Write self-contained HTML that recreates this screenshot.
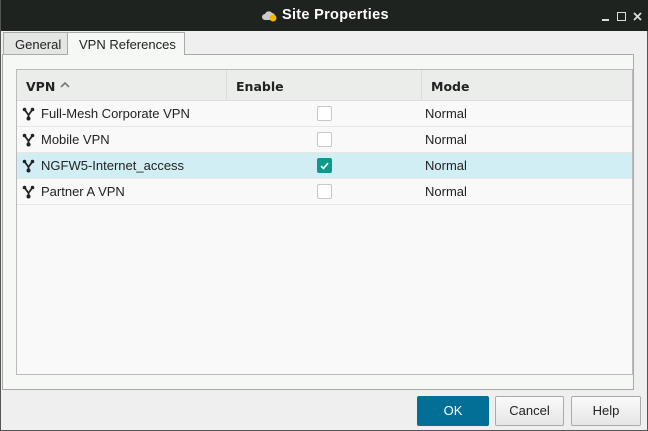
<!DOCTYPE html>
<html><head><style>
*{box-sizing:border-box;margin:0;padding:0}
body{width:648px;height:431px;overflow:hidden;background:#efefef;font-family:"Liberation Sans","DejaVu Sans",sans-serif;font-size:13px;color:#222;position:relative;border-left:1px solid #555;border-right:1px solid #555;border-bottom:1px solid #555}
.abs{position:absolute}
.title{left:0;top:0;width:648px;height:31px;background:#1e2320;color:#fff;font-weight:bold;font-size:14.5px;font-family:"Liberation Sans",sans-serif;letter-spacing:0.3px}
.tab{top:32px;height:23px;border:1px solid #aaa;font-size:13px;padding:4px 0 0 11px}
.panel{left:1px;top:54px;width:632px;height:336px;border:1px solid #aaa;background:#f5f8f5}
.table{left:15px;top:69px;width:617px;height:306px;border:1px solid #bbb;background:#f8f9f8}
.hdr{left:0;top:0;width:615px;height:31px;background:#ebedeb;border-bottom:1px solid #ddd;font-weight:bold;font-family:"DejaVu Sans",sans-serif;font-size:12.5px}
.row{left:0;width:615px;height:26px;border-bottom:1px solid #e6e8e6}
.cb{width:15px;height:15px;border:1px solid #c8c8c8;border-radius:2px;background:#fff;left:300px;top:5px}
.btn{top:396px;height:30px;border:1px solid #aaa;border-radius:2px;background:linear-gradient(#fafafa,#e6e6e6);text-align:center;line-height:28px;font-size:13px}
</style></head><body>
<div class="abs title">
 <svg class="abs" style="left:261px;top:9px" width="16" height="14" viewBox="0 0 16 14"><path d="M3 11a3 3 0 0 1 0-6a4 4 0 0 1 7-1a3 3 0 0 1 3 3v4z" fill="#ccc"/><circle cx="11" cy="9" r="3.5" fill="#f5b800"/></svg>
 <span class="abs" style="left:281px;top:7px">Site Properties</span>
 <span class="abs" style="left:601px;top:19px;width:7px;height:2px;background:#ddd"></span>
 <span class="abs" style="left:616px;top:12px;width:9px;height:9px;border:1.5px solid #ddd"></span>
 <svg class="abs" style="left:632px;top:12px" width="9" height="9"><path d="M1 1l7 7M8 1l-7 7" stroke="#ddd" stroke-width="1.8"/></svg>
</div>
<div class="abs panel"></div>
<div class="abs tab" style="left:2px;width:65px;background:#e4e6e4">General</div>
<div class="abs tab" style="left:66px;width:118px;background:#f5f8f5;border-bottom:none;height:23px">VPN References</div>
<div class="abs table">
 <div class="abs hdr">
  <span class="abs" style="left:9px;top:9px">VPN</span>
  <svg class="abs" style="left:43px;top:11px" width="10" height="7"><path d="M1 6l4-4l4 4" stroke="#777" stroke-width="1.6" fill="none"/></svg>
  <span class="abs" style="left:209px;top:0;width:1px;height:31px;background:#ddd"></span>
  <span class="abs" style="left:219px;top:9px">Enable</span>
  <span class="abs" style="left:404px;top:0;width:1px;height:31px;background:#ddd"></span>
  <span class="abs" style="left:414px;top:9px">Mode</span>
 </div>
 <div class="abs row" style="top:31px"><svg class="abs" style="left:5px;top:6px" width="13" height="14"><path d="M2.5 2.5l4 5.5l4-5.5M6.5 8v4" stroke="#222" stroke-width="1.8" fill="none"/><circle cx="2.5" cy="2.5" r="1.8" fill="#222"/><circle cx="10.5" cy="2.5" r="1.8" fill="#222"/><circle cx="6.5" cy="11.5" r="2" fill="#222"/></svg><span class="abs" style="left:24px;top:5px">Full-Mesh Corporate VPN</span><div class="abs cb"></div><span class="abs" style="left:408px;top:5px">Normal</span></div>
 <div class="abs row" style="top:57px"><svg class="abs" style="left:5px;top:6px" width="13" height="14"><path d="M2.5 2.5l4 5.5l4-5.5M6.5 8v4" stroke="#222" stroke-width="1.8" fill="none"/><circle cx="2.5" cy="2.5" r="1.8" fill="#222"/><circle cx="10.5" cy="2.5" r="1.8" fill="#222"/><circle cx="6.5" cy="11.5" r="2" fill="#222"/></svg><span class="abs" style="left:24px;top:5px">Mobile VPN</span><div class="abs cb"></div><span class="abs" style="left:408px;top:5px">Normal</span></div>
 <div class="abs row" style="top:83px;background:#d1eef5"><svg class="abs" style="left:5px;top:6px" width="13" height="14"><path d="M2.5 2.5l4 5.5l4-5.5M6.5 8v4" stroke="#222" stroke-width="1.8" fill="none"/><circle cx="2.5" cy="2.5" r="1.8" fill="#222"/><circle cx="10.5" cy="2.5" r="1.8" fill="#222"/><circle cx="6.5" cy="11.5" r="2" fill="#222"/></svg><span class="abs" style="left:24px;top:5px">NGFW5-Internet_access</span><div class="abs cb" style="background:#0c9b8a;border-color:#0c9b8a"><svg width="13" height="13"><path d="M3 7l2.5 2.5L10 4" stroke="#fff" stroke-width="1.6" fill="none"/></svg></div><span class="abs" style="left:408px;top:5px">Normal</span></div>
 <div class="abs row" style="top:109px"><svg class="abs" style="left:5px;top:6px" width="13" height="14"><path d="M2.5 2.5l4 5.5l4-5.5M6.5 8v4" stroke="#222" stroke-width="1.8" fill="none"/><circle cx="2.5" cy="2.5" r="1.8" fill="#222"/><circle cx="10.5" cy="2.5" r="1.8" fill="#222"/><circle cx="6.5" cy="11.5" r="2" fill="#222"/></svg><span class="abs" style="left:24px;top:5px">Partner A VPN</span><div class="abs cb"></div><span class="abs" style="left:408px;top:5px">Normal</span></div>
</div>
<div class="abs btn" style="left:416px;width:72px;background:#046f96;border-color:#046f96;color:#fff">OK</div>
<div class="abs btn" style="left:494px;width:69px">Cancel</div>
<div class="abs btn" style="left:570px;width:70px">Help</div>
</body></html>
